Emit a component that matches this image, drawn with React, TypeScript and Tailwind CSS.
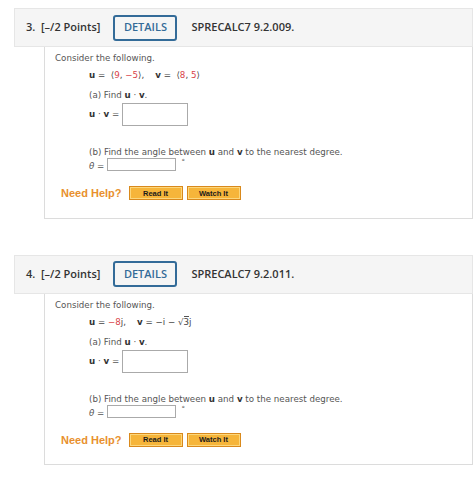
import React from 'react'

type Q = {
  num: string
  code: string
  math: React.ReactNode
  boxW: string
}

function HelpButton({ label }: { label: string }) {
  return (
    <div className="h-[14px] w-[54px] border border-[#d9891c] bg-[#f6b53a] shadow-[inset_0_0_0_1px_#fcd77c] flex items-center justify-center">
      <span className="text-[7.5px] font-bold text-[#1a1a1a] font-['Liberation_Sans',Arial,sans-serif] leading-none">{label}</span>
    </div>
  )
}

function Question({ q }: { q: Q }) {
  return (
    <div className="ml-[14px] mr-[1px]">
      {/* header bar */}
      <div className="h-[39px] bg-[#f5f5f5] border border-[#e6e6e6] flex items-center pl-[11px] font-['Open_Sans',sans-serif] text-[#333] text-[11px] font-semibold">
        <span className="w-[15px]">{q.num}</span>
        <span>[–/2 Points]</span>
        <div className="ml-[13px] w-[64px] h-[26px] rounded-[3px] border-2 border-[#336b98] flex items-center justify-center text-[#336b98] text-[11px]">
          DETAILS
        </div>
        <span className="ml-[14px]">{q.code}</span>
      </div>

      {/* body */}
      <div className="ml-[30px] border-l border-b border-r border-[#dcdcdc] pl-[10px] pt-[6px] pb-[16px] font-['DejaVu_Sans',Verdana,sans-serif] text-[8.7px] text-[#555]">
        <div className="h-[10px] leading-[10px]">Consider the following.</div>
        <div className="ml-[34px]">
          <div className="mt-[7px] h-[10px] leading-[10px] text-[#444] whitespace-pre">{q.math}</div>
          <div className="mt-[10px] h-[10px] leading-[10px]">
            (a) Find <b className="text-[#333]">u</b> · <b className="text-[#333]">v</b>.
          </div>
          <div className="mt-[3px] flex items-center gap-[3px]">
            <span>
              <b className="text-[#333]">u</b> · <b className="text-[#333]">v</b> =
            </span>
            <div className={`${q.boxW} h-[23px] border border-[#aaa] bg-white`} />
          </div>
          <div className="mt-[21px] h-[10px] leading-[10px]">
            (b) Find the angle between <b className="text-[#333]">u</b> and <b className="text-[#333]">v</b> to the nearest degree.
          </div>
          <div className="mt-[1px] flex items-start gap-[3px]">
            <span className="mt-[2px]">
              <i>θ</i> =
            </span>
            <div className="w-[69px] h-[13px] border border-[#aaa] bg-white" />
            <span className="ml-[2px] text-[7px] mt-[-1px]">°</span>
          </div>
        </div>
        <div className="mt-[12px] ml-[6px] flex items-center gap-[4px]">
          <span className="font-['Liberation_Sans',Arial,sans-serif] font-bold text-[11px] text-[#e8902e] mr-[3px]">Need Help?</span>
          <HelpButton label="Read It" />
          <HelpButton label="Watch It" />
        </div>
      </div>
    </div>
  )
}

const red = 'text-[#d9434a]'

export default function App() {
  const questions: Q[] = [
    {
      num: '3.',
      code: 'SPRECALC7 9.2.009.',
      boxW: 'w-[66px]',
      math: (
        <span>
          <b className="text-[#333]">u</b>{' =  ⟨'}<span className={red}>9</span>{', '}<span className={red}>−5</span>{'⟩,    '}
          <b className="text-[#333]">v</b>{' =  ⟨'}<span className={red}>8</span>{', '}<span className={red}>5</span>{'⟩'}
        </span>
      )
    },
    {
      num: '4.',
      code: 'SPRECALC7 9.2.011.',
      boxW: 'w-[66px]',
      math: (
        <span>
          <b className="text-[#333]">u</b>{' = '}<span className={red}>−8</span>{'j,    '}
          <b className="text-[#333]">v</b>{' = −i − √'}<span className="border-t border-[#555]">3</span>j
        </span>
      )
    }
  ]

  return (
    <div className="w-[474px] h-[479px] bg-white overflow-hidden pt-[8px]">
      <Question q={questions[0]} />
      <div className="h-[36px]" />
      <Question q={questions[1]} />
    </div>
  )
}
